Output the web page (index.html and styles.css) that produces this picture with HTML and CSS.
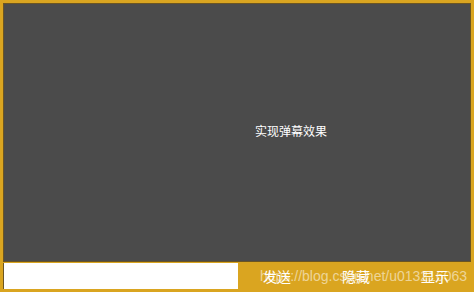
FILE: index.html
```html
<!DOCTYPE html>
<html>
<head>
<meta charset="utf-8">
<link rel="stylesheet" href="styles.css">
</head>
<body>
<div class="box">
  <div class="screen">
    <span class="danmu">实现弹幕效果</span>
  </div>
  <div class="bar">
    <input class="msg" type="text">
    <div class="btns">
      <span class="btn">发送</span>
      <span class="btn">隐藏</span>
      <span class="btn">显示</span>
    </div>
    <span class="mark">https://blog.csdn.net/u013216063</span>
  </div>
</div>
</body>
</html>
```
FILE: styles.css
```css
html, body {
  margin: 0;
  padding: 0;
  background: #ffffff;
}
.box {
  width: 474px;
  height: 292px;
  box-sizing: border-box;
  border: 3px solid #daa520;
  border-bottom: none;
  background: #daa520;
  display: flex;
  flex-direction: column;
  font-family: "Noto Sans CJK SC", "Liberation Sans", sans-serif;
}
.screen {
  position: relative;
  height: 259px;
  background: #4b4b4b;
  box-shadow: inset 0 0 0 1px #6b5523;
  overflow: hidden;
}
.danmu {
  position: absolute;
  left: 252px;
  top: 118px;
  color: #ffffff;
  font-size: 12px;
  line-height: 20px;
}
.bar {
  position: relative;
  display: flex;
  align-items: flex-start;
  height: 30px;
  padding-top: 1px;
  box-sizing: border-box;
}
.msg {
  width: 235px;
  height: 26px;
  margin: 0;
  padding: 0;
  box-sizing: border-box;
  border: none;
  border-left: 1px solid #6b5523;
  background: #ffffff;
  outline: none;
}
.btns {
  display: flex;
  padding-left: 25px;
  gap: 50px;
}
.btn {
  color: #ffffff;
  font-size: 14px;
  line-height: 26px;
  width: 29px;
  white-space: nowrap;
}
.mark {
  position: absolute;
  left: 257px;
  top: 1px;
  font-family: "Liberation Sans", sans-serif;
  font-size: 14px;
  line-height: 26px;
  color: rgba(255, 255, 255, 0.55);
  white-space: nowrap;
  pointer-events: none;
}
```
